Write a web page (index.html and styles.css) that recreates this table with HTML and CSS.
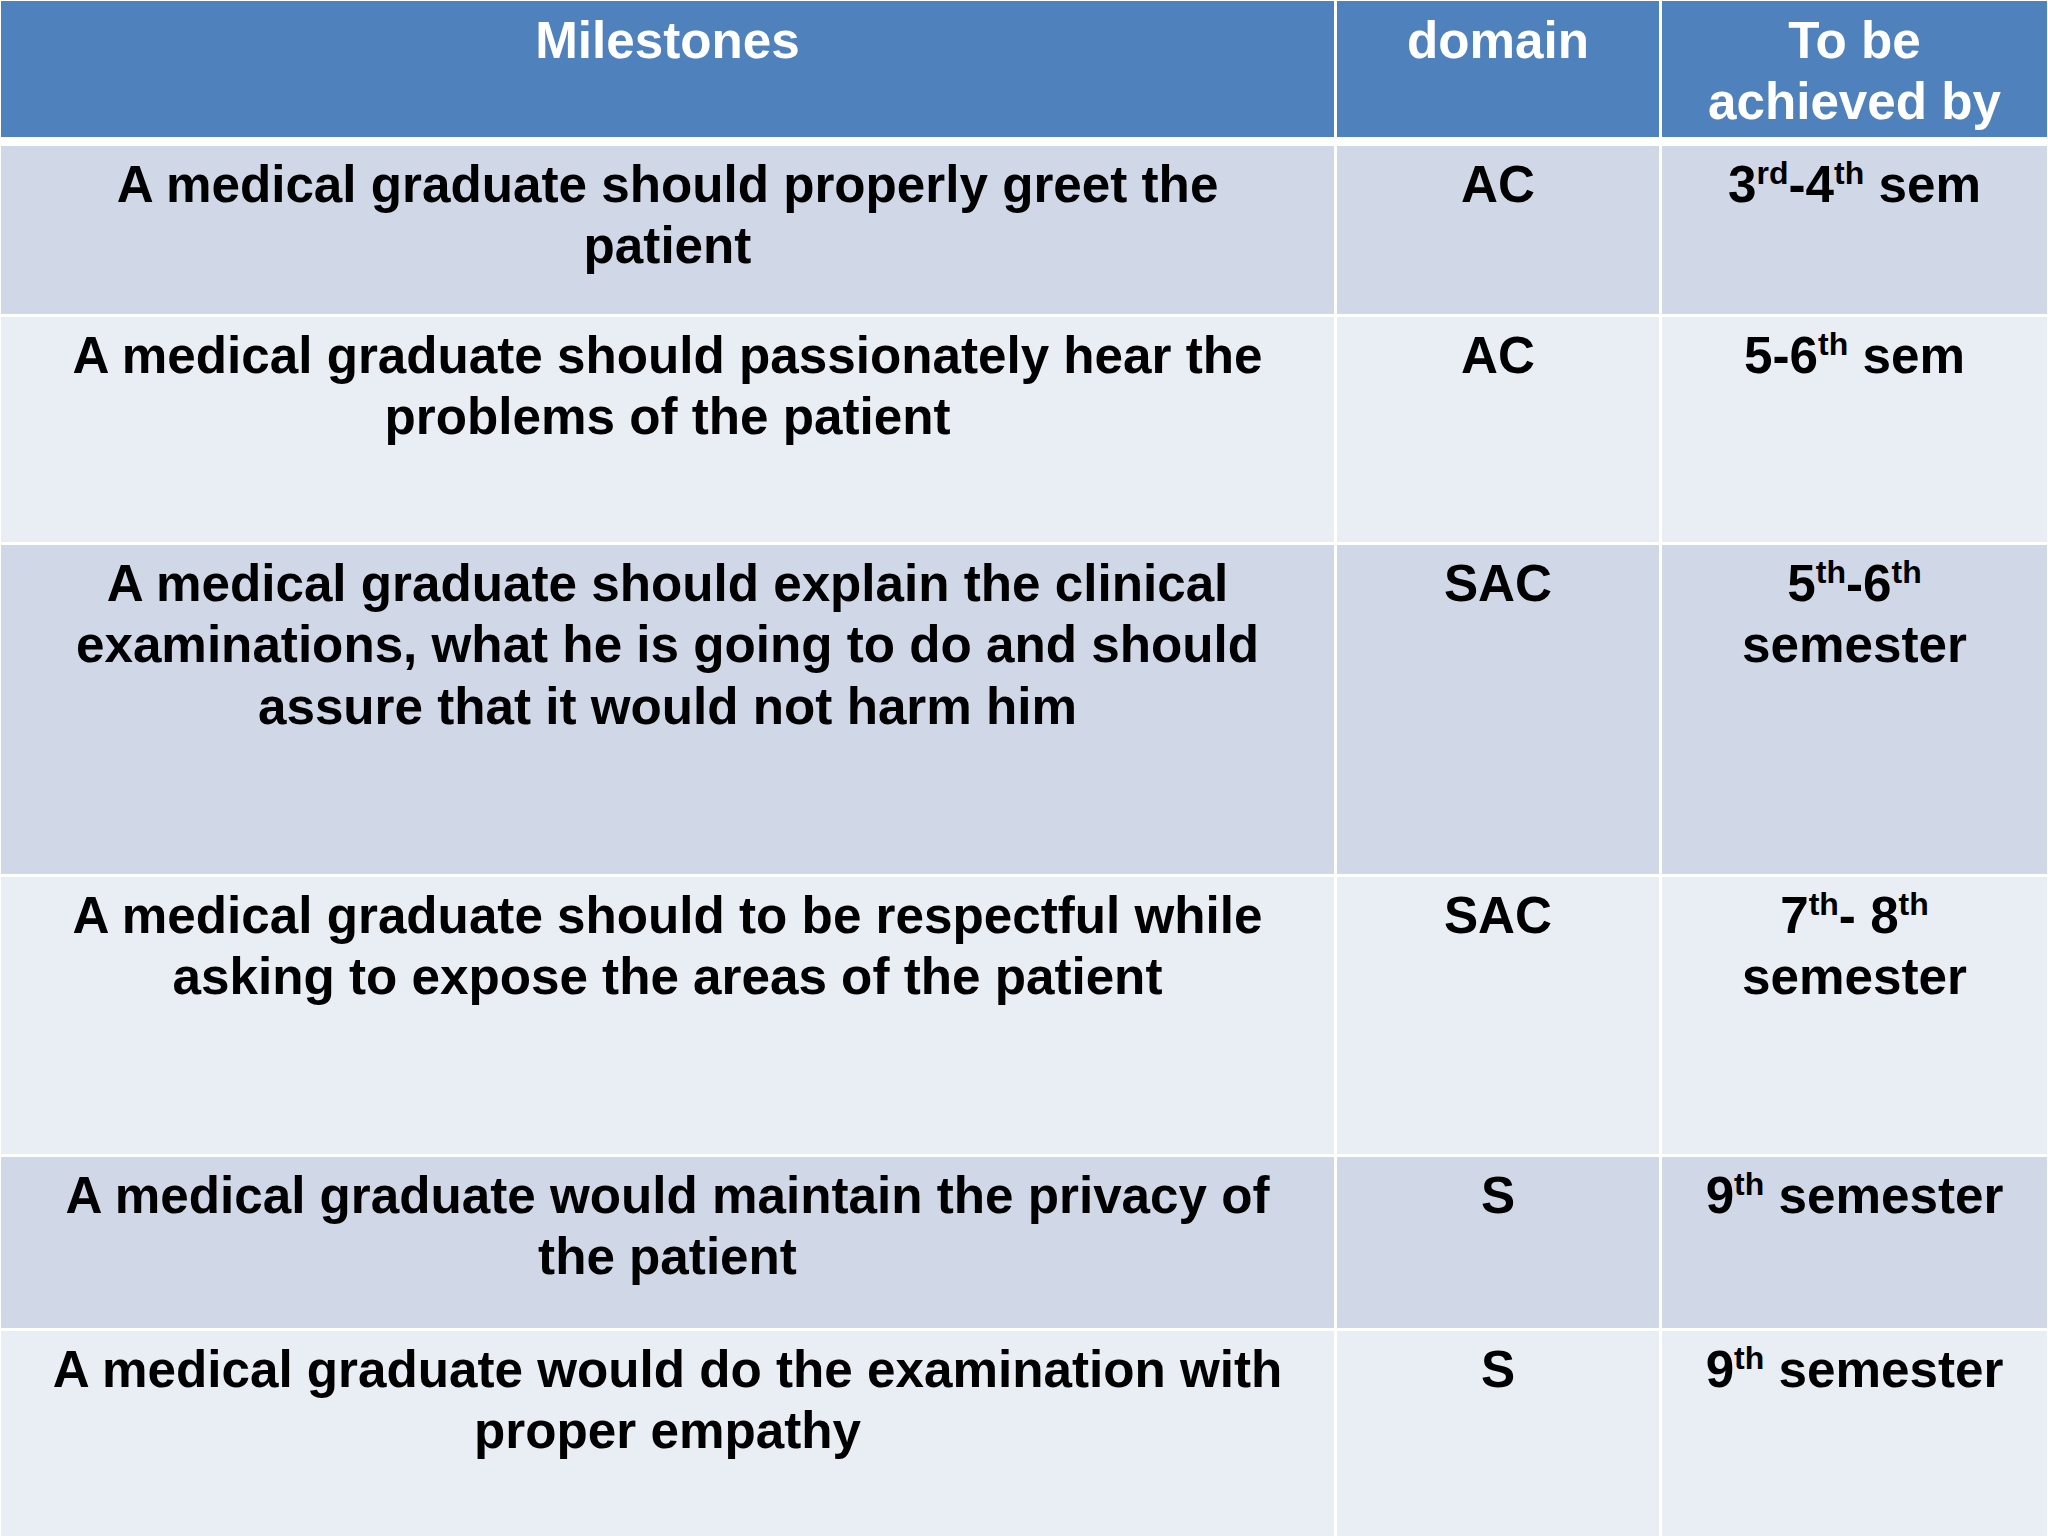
FILE: index.html
```html
<!DOCTYPE html>
<html lang="en">
<head>
<meta charset="utf-8">
<title>Milestones</title>
<link rel="stylesheet" href="styles.css">
</head>
<body>
<div class="table">
  <div class="cell head">Milestones</div>
  <div class="cell head">domain</div>
  <div class="cell head">To be<br>achieved by</div>

  <div class="cell odd">A medical graduate should properly greet the<br>patient</div>
  <div class="cell odd">AC</div>
  <div class="cell odd">3<sup class="sup">rd</sup>-4<sup class="sup">th</sup> sem</div>

  <div class="cell even">A medical graduate should passionately hear the<br>problems of the patient</div>
  <div class="cell even">AC</div>
  <div class="cell even">5-6<sup class="sup">th</sup> sem</div>

  <div class="cell odd">A medical graduate should explain the clinical<br>examinations, what he is going to do and should<br>assure that it would not harm him</div>
  <div class="cell odd">SAC</div>
  <div class="cell odd">5<sup class="sup">th</sup>-6<sup class="sup">th</sup><br>semester</div>

  <div class="cell even">A medical graduate should to be respectful while<br>asking to expose the areas of the patient</div>
  <div class="cell even">SAC</div>
  <div class="cell even">7<sup class="sup">th</sup>- 8<sup class="sup">th</sup><br>semester</div>

  <div class="cell odd">A medical graduate would maintain the privacy of<br>the patient</div>
  <div class="cell odd">S</div>
  <div class="cell odd">9<sup class="sup">th</sup> semester</div>

  <div class="cell even">A medical graduate would do the examination with<br>proper empathy</div>
  <div class="cell even">S</div>
  <div class="cell even">9<sup class="sup">th</sup> semester</div>
</div>
</body>
</html>
```

FILE: styles.css
```css
html, body {
  margin: 0;
  padding: 0;
  background: #ffffff;
}

body {
  width: 2048px;
  height: 1536px;
  overflow: hidden;
  font-family: "Liberation Sans", Arial, sans-serif;
  font-weight: bold;
  font-size: 51.2px;
  line-height: 61.44px;
  color: #000000;
}

.table {
  display: grid;
  grid-template-columns: 1333px 322px 385px;
  grid-template-rows: 142px 168px 225px 329px 277px 171px 205px;
  column-gap: 3px;
  row-gap: 3px;
  padding: 1px 0 0 1px;
}

.cell {
  padding: 8px 20px 0;
  text-align: center;
  overflow: hidden;
}

.head {
  background: #4f81bd;
  color: #ffffff;
  margin-bottom: 6px;
  padding-top: 9px;
}

.odd {
  background: #d0d8e8;
}

.even {
  background: #e9edf4;
}

.sup {
  font-size: 32px;
  line-height: 0;
  vertical-align: super;
}
```
